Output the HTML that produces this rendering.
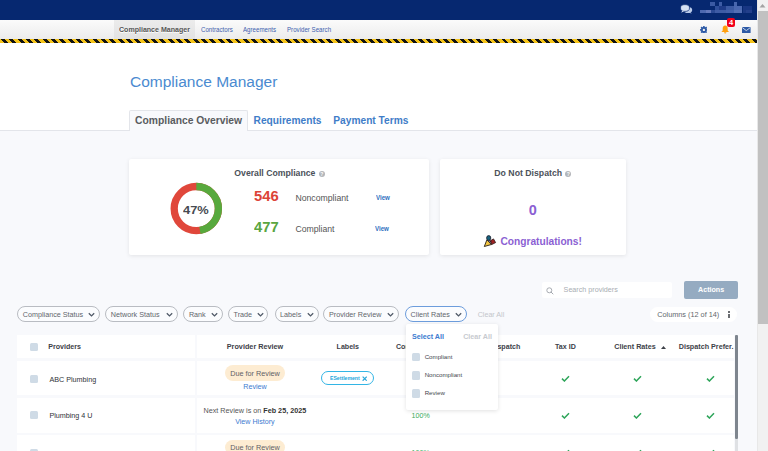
<!DOCTYPE html>
<html><head><meta charset="utf-8"><style>
html,body{margin:0;padding:0;width:768px;height:451px;overflow:hidden;background:#f7f8fc;font-family:"Liberation Sans",sans-serif}
.t{position:absolute;line-height:1;white-space:nowrap}
.r{position:absolute}
</style></head><body>
<div class="r" style="left:0.00px;top:0.00px;width:757.00px;height:451.00px;background:#f8f9fc"></div>
<div class="r" style="left:0.00px;top:0.00px;width:757.00px;height:20.00px;background:#062870"></div>
<div class="r" style="left:0.00px;top:20.00px;width:757.00px;height:18.50px;background:linear-gradient(#fbfbfb,#ececec)"></div>
<div class="r" style="left:114.00px;top:20.00px;width:81.00px;height:18.50px;background:linear-gradient(#ececec,#e2e2e2)"></div>
<div class="t" style="left:119.00px;top:25.78px;font-size:7.7px;font-weight:700;color:#555;transform:scaleX(0.917);transform-origin:0 0;text-shadow:0 1px 0 #fff;">Compliance Manager</div>
<div class="t" style="left:201.00px;top:25.71px;font-size:7.2px;font-weight:400;color:#3d5fae;transform:scaleX(0.855);transform-origin:0 0;">Contractors</div>
<div class="t" style="left:243.00px;top:25.71px;font-size:7.2px;font-weight:400;color:#3d5fae;transform:scaleX(0.855);transform-origin:0 0;">Agreements</div>
<div class="t" style="left:287.00px;top:25.71px;font-size:7.2px;font-weight:400;color:#3d5fae;transform:scaleX(0.855);transform-origin:0 0;">Provider Search</div>
<div class="r" style="left:0.00px;top:38.50px;width:757.00px;height:4.00px;background:repeating-linear-gradient(45deg,#f4c31a 0,#f4c31a 3.1px,#111 3.1px,#111 5.9px)"></div>
<div class="r" style="left:0.00px;top:42.50px;width:757.00px;height:87.00px;background:#fff"></div>
<div class="r" style="left:0.00px;top:129.50px;width:757.00px;height:1.00px;background:#e3e5ea"></div>
<div class="t" style="left:130.00px;top:73.98px;font-size:15.5px;font-weight:400;color:#4a8ad0;">Compliance Manager</div>
<div class="r" style="left:129.00px;top:109.50px;width:118.80px;height:21.00px;background:#f8f9fc;border:1px solid #e3e5ea;border-bottom:none;border-radius:2px 2px 0 0;box-sizing:border-box"></div>
<div class="t" style="left:135.10px;top:115.98px;font-size:10.3px;font-weight:700;color:#595c60;">Compliance Overview</div>
<div class="t" style="left:253.60px;top:115.57px;font-size:10.2px;font-weight:700;color:#3f7dc8;">Requirements</div>
<div class="t" style="left:333.30px;top:115.57px;font-size:10.2px;font-weight:700;color:#3f7dc8;">Payment Terms</div>
<div class="r" style="left:129.00px;top:159.00px;width:300.00px;height:96.00px;background:#fff;border-radius:2px;box-shadow:0 1px 4px rgba(0,0,0,.09)"></div>
<div class="r" style="left:440.00px;top:159.00px;width:186.00px;height:96.00px;background:#fff;border-radius:2px;box-shadow:0 1px 4px rgba(0,0,0,.09)"></div>
<div class="t" style="left:234.30px;top:169.34px;font-size:8.7px;font-weight:700;color:#4b5159;">Overall Compliance</div>
<div class="r" style="left:318.6px;top:170.8px;width:6.2px;height:6.2px;border-radius:50%;background:#b3b6ba;color:#fff;font-size:5px;font-weight:700;line-height:6.2px;text-align:center">?</div>
<svg class="r" style="left:169.7px;top:182.4px" width="53" height="53" viewBox="0 0 53 53"><circle cx="26.3" cy="26.6" r="22.1" fill="none" stroke="#e0473b" stroke-width="7.3"/><circle cx="26.3" cy="26.6" r="22.1" fill="none" stroke="#58a93d" stroke-width="7.3" stroke-dasharray="65.26 200" transform="rotate(-90 26.3 26.6)"/></svg>
<div class="t" style="left:182.80px;top:203.78px;font-size:11.6px;font-weight:700;color:#474b52;transform:scaleX(1.11);transform-origin:0 0;">47%</div>
<div class="t" style="left:254.30px;top:188.12px;font-size:15.1px;font-weight:700;color:#dc4337;transform:scaleX(0.98);transform-origin:0 0;">546</div>
<div class="t" style="left:254.30px;top:219.02px;font-size:15.1px;font-weight:700;color:#5aa540;transform:scaleX(0.98);transform-origin:0 0;">477</div>
<div class="t" style="left:295.40px;top:193.64px;font-size:8.7px;font-weight:400;color:#555;">Noncompliant</div>
<div class="t" style="left:295.40px;top:224.54px;font-size:8.7px;font-weight:400;color:#555;">Compliant</div>
<div class="t" style="left:375.60px;top:195.21px;font-size:6.6px;font-weight:700;color:#2f6fc0;transform:scaleX(0.93);transform-origin:0 0;">View</div>
<div class="t" style="left:374.60px;top:226.11px;font-size:6.6px;font-weight:700;color:#2f6fc0;transform:scaleX(0.93);transform-origin:0 0;">View</div>
<div class="t" style="left:494.30px;top:169.21px;font-size:8.73px;font-weight:700;color:#4b5159;">Do Not Dispatch</div>
<div class="r" style="left:565.2px;top:171px;width:6.2px;height:6.2px;border-radius:50%;background:#b3b6ba;color:#fff;font-size:5px;font-weight:700;line-height:6.2px;text-align:center">?</div>
<div class="t" style="left:532.90px;top:203.13px;font-size:14.5px;font-weight:700;color:#8b5fd3;transform:translateX(-50%);">0</div>
<div class="t" style="left:500.40px;top:236.87px;font-size:10.2px;font-weight:700;color:#8b5fd3;">Congratulations!</div>
<svg class="r" style="left:483px;top:234px" width="14" height="14" viewBox="0 0 14 14"><path d="M1.3 12.5 L3.9 5.8 L8.4 10.5 Z" fill="#f4c540" stroke="#262018" stroke-width=".9" stroke-linejoin="round"/><path d="M4.4 5.4 L8.2 6.8 L8.9 9.9 Z" fill="#3b2a4a"/><ellipse cx="5.7" cy="4" rx="2.1" ry="2.4" fill="#17627e" stroke="#1a1a2a" stroke-width=".8"/><path d="M7.6 6.6 L10.5 4.9 L12.6 8.6 L8.6 10.6 Z" fill="#9e2222" stroke="#2a1414" stroke-width=".8" stroke-linejoin="round"/></svg>
<div class="r" style="left:541.70px;top:281.50px;width:130.80px;height:16.70px;background:#fff;border-radius:2px"></div>
<svg class="r" style="left:546.3px;top:286.6px" width="8" height="8" viewBox="0 0 8 8"><circle cx="3.3" cy="3.3" r="2.5" fill="none" stroke="#a3a8ae" stroke-width=".95"/><path d="M5.1 5.1 L7 7" stroke="#a3a8ae" stroke-width="1" stroke-linecap="round"/></svg>
<div class="t" style="left:563.60px;top:287.12px;font-size:7.18px;font-weight:400;color:#a9adb3;">Search providers</div>
<div class="r" style="left:683.80px;top:281.20px;width:54.00px;height:17.50px;background:#95abc1;border-radius:2px"></div>
<div class="t" style="left:698.00px;top:286.55px;font-size:7.15px;font-weight:700;color:#fff;">Actions</div>
<div class="r" style="left:17.2px;top:306.4px;width:82.89999999999999px;height:15.9px;box-sizing:border-box;border:1px solid #b9bcc2;border-radius:8px;background:#fbfcfe"></div>
<div class="t" style="left:22.80px;top:310.81px;font-size:7.2px;font-weight:400;color:#62666c;">Compliance Status</div>
<svg class="r" style="left:88.25px;top:311.5px" width="7" height="6" viewBox="0 0 7 6"><path d="M0.8 1.2 L3.5 3.9 L6.2 1.2" fill="none" stroke="#505a68" stroke-width="1.3"/></svg>
<div class="r" style="left:105.2px;top:306.4px;width:72.7px;height:15.9px;box-sizing:border-box;border:1px solid #b9bcc2;border-radius:8px;background:#fbfcfe"></div>
<div class="t" style="left:110.80px;top:310.81px;font-size:7.2px;font-weight:400;color:#62666c;">Network Status</div>
<svg class="r" style="left:166.05px;top:311.5px" width="7" height="6" viewBox="0 0 7 6"><path d="M0.8 1.2 L3.5 3.9 L6.2 1.2" fill="none" stroke="#505a68" stroke-width="1.3"/></svg>
<div class="r" style="left:183.3px;top:306.4px;width:39.5px;height:15.9px;box-sizing:border-box;border:1px solid #b9bcc2;border-radius:8px;background:#fbfcfe"></div>
<div class="t" style="left:188.90px;top:310.81px;font-size:7.2px;font-weight:400;color:#62666c;">Rank</div>
<svg class="r" style="left:210.95px;top:311.5px" width="7" height="6" viewBox="0 0 7 6"><path d="M0.8 1.2 L3.5 3.9 L6.2 1.2" fill="none" stroke="#505a68" stroke-width="1.3"/></svg>
<div class="r" style="left:228px;top:306.4px;width:40.39999999999998px;height:15.9px;box-sizing:border-box;border:1px solid #b9bcc2;border-radius:8px;background:#fbfcfe"></div>
<div class="t" style="left:233.60px;top:310.81px;font-size:7.2px;font-weight:400;color:#62666c;">Trade</div>
<svg class="r" style="left:256.55px;top:311.5px" width="7" height="6" viewBox="0 0 7 6"><path d="M0.8 1.2 L3.5 3.9 L6.2 1.2" fill="none" stroke="#505a68" stroke-width="1.3"/></svg>
<div class="r" style="left:274.5px;top:306.4px;width:44.10000000000002px;height:15.9px;box-sizing:border-box;border:1px solid #b9bcc2;border-radius:8px;background:#fbfcfe"></div>
<div class="t" style="left:280.10px;top:310.81px;font-size:7.2px;font-weight:400;color:#62666c;">Labels</div>
<svg class="r" style="left:306.75px;top:311.5px" width="7" height="6" viewBox="0 0 7 6"><path d="M0.8 1.2 L3.5 3.9 L6.2 1.2" fill="none" stroke="#505a68" stroke-width="1.3"/></svg>
<div class="r" style="left:323.4px;top:306.4px;width:75.60000000000002px;height:15.9px;box-sizing:border-box;border:1px solid #b9bcc2;border-radius:8px;background:#fbfcfe"></div>
<div class="t" style="left:329.00px;top:310.81px;font-size:7.2px;font-weight:400;color:#62666c;">Provider Review</div>
<svg class="r" style="left:387.15px;top:311.5px" width="7" height="6" viewBox="0 0 7 6"><path d="M0.8 1.2 L3.5 3.9 L6.2 1.2" fill="none" stroke="#505a68" stroke-width="1.3"/></svg>
<div class="r" style="left:405px;top:306.4px;width:61.89999999999998px;height:15.9px;box-sizing:border-box;border:1px solid #6d9ddc;border-radius:8px;background:#fbfcfe"></div>
<div class="t" style="left:410.60px;top:310.81px;font-size:7.2px;font-weight:400;color:#62666c;">Client Rates</div>
<svg class="r" style="left:455.05px;top:311.5px" width="7" height="6" viewBox="0 0 7 6"><path d="M0.8 1.2 L3.5 3.9 L6.2 1.2" fill="none" stroke="#505a68" stroke-width="1.3"/></svg>
<div class="t" style="left:477.70px;top:311.75px;font-size:7.15px;font-weight:400;color:#c3c6cb;">Clear All</div>
<div class="r" style="left:649.70px;top:307.00px;width:87.80px;height:15.00px;background:#fff;border-radius:8px"></div>
<div class="t" style="left:657.20px;top:311.32px;font-size:7.3px;font-weight:400;color:#63676d;">Columns (12 of 14)</div>
<div class="r" style="left:727.70px;top:311.20px;width:2.10px;height:2.10px;background:#3a3d42;border-radius:50%"></div>
<div class="r" style="left:727.70px;top:313.50px;width:2.10px;height:2.10px;background:#3a3d42;border-radius:50%"></div>
<div class="r" style="left:727.70px;top:315.80px;width:2.10px;height:2.10px;background:#3a3d42;border-radius:50%"></div>
<div class="r" style="left:17.00px;top:335.20px;width:178.40px;height:23.20px;background:#fff"></div>
<div class="r" style="left:197.40px;top:335.20px;width:537.10px;height:23.20px;background:#fff"></div>
<div class="r" style="left:17.00px;top:360.80px;width:178.40px;height:34.50px;background:#fff"></div>
<div class="r" style="left:197.40px;top:360.80px;width:537.10px;height:34.50px;background:#fff"></div>
<div class="r" style="left:17.00px;top:398.00px;width:178.40px;height:34.70px;background:#fff"></div>
<div class="r" style="left:197.40px;top:398.00px;width:537.10px;height:34.70px;background:#fff"></div>
<div class="r" style="left:17.00px;top:435.40px;width:178.40px;height:34.60px;background:#fff"></div>
<div class="r" style="left:197.40px;top:435.40px;width:537.10px;height:34.60px;background:#fff"></div>
<div class="r" style="left:29.90px;top:342.80px;width:8.20px;height:8.20px;background:#cfdbe6;border-radius:1.5px"></div>
<div class="t" style="left:48.20px;top:343.79px;font-size:7.1px;font-weight:700;color:#3d4148;">Providers</div>
<div class="t" style="left:255.00px;top:342.86px;font-size:7.25px;font-weight:700;color:#3d4148;transform:translateX(-50%);">Provider Review</div>
<div class="t" style="left:347.80px;top:344.19px;font-size:7.1px;font-weight:700;color:#3d4148;transform:translateX(-50%);">Labels</div>
<div class="t" style="left:396.00px;top:343.79px;font-size:7.1px;font-weight:700;color:#3d4148;">Compliance</div>
<div class="t" style="left:465.10px;top:343.79px;font-size:7.1px;font-weight:700;color:#3d4148;">Do Not Dispatch</div>
<div class="t" style="left:565.40px;top:343.79px;font-size:7.1px;font-weight:700;color:#3d4148;transform:translateX(-50%);">Tax ID</div>
<div class="t" style="left:614.20px;top:343.21px;font-size:7.2px;font-weight:700;color:#3d4148;">Client Rates</div>
<svg class="r" style="left:661px;top:345.5px" width="5" height="3" viewBox="0 0 5 3"><path d="M0 3 L2.5 0 L5 3 Z" fill="#3d4148"/></svg>
<div class="t" style="left:678.70px;top:343.21px;font-size:7.2px;font-weight:700;color:#3d4148;">Dispatch Prefer.</div>
<div class="r" style="left:30.20px;top:374.60px;width:8.20px;height:8.20px;background:#cfdbe6;border-radius:1.5px"></div>
<div class="t" style="left:49.40px;top:375.91px;font-size:7.2px;font-weight:400;color:#2f3237;">ABC Plumbing</div>
<div class="r" style="left:225.00px;top:365.20px;width:60.10px;height:15.90px;background:#fdecd2;border-radius:8px"></div>
<div class="t" style="left:255.00px;top:370.15px;font-size:7.27px;font-weight:400;color:#5f6166;transform:translateX(-50%);">Due for Review</div>
<div class="t" style="left:255.00px;top:382.81px;font-size:7.2px;font-weight:400;color:#3c7bd0;transform:translateX(-50%);">Review</div>
<div class="r" style="left:321.1px;top:371.1px;width:53.4px;height:14.4px;box-sizing:border-box;border:1px solid #33b5e5;border-radius:7.2px;background:#fff"></div>
<div class="t" style="left:329.50px;top:375.91px;font-size:5.3px;font-weight:700;color:#23a6dc;transform:scaleX(0.97);transform-origin:0 0;">ESettlement</div>
<svg class="r" style="left:361.8px;top:375.6px" width="5.4" height="5.4" viewBox="0 0 5 5"><path d="M0.6 0.6 L4.4 4.4 M4.4 0.6 L0.6 4.4" stroke="#2aa8da" stroke-width="1.1"/></svg>
<div class="r" style="left:30.20px;top:410.50px;width:8.20px;height:8.20px;background:#cfdbe6;border-radius:1.5px"></div>
<div class="t" style="left:49.40px;top:412.01px;font-size:7.2px;font-weight:400;color:#2f3237;">Plumbing 4 U</div>
<div class="t" style="left:203.50px;top:406.59px;font-size:7.22px;font-weight:400;color:#555;">Next Review is on <b style="color:#333">Feb 25, 2025</b></div>
<div class="t" style="left:254.90px;top:419.06px;font-size:7.13px;font-weight:400;color:#3c7bd0;transform:translateX(-50%);">View History</div>
<div class="t" style="left:411.60px;top:412.59px;font-size:7.1px;font-weight:400;color:#3aaa5c;">100%</div>
<div class="r" style="left:30.20px;top:448.60px;width:8.20px;height:8.20px;background:#cfdbe6;border-radius:1.5px"></div>
<div class="r" style="left:225.10px;top:439.50px;width:59.60px;height:15.90px;background:#fdecd2;border-radius:8px"></div>
<div class="t" style="left:255.00px;top:444.45px;font-size:7.27px;font-weight:400;color:#5f6166;transform:translateX(-50%);">Due for Review</div>
<div class="t" style="left:411.60px;top:449.79px;font-size:7.1px;font-weight:400;color:#3aaa5c;">100%</div>
<svg class="r" style="left:560.80px;top:374.50px" width="9" height="7" viewBox="0 0 9 7"><path d="M1 3.6 L3.4 6 L8 1.2" fill="none" stroke="#2ea55a" stroke-width="1.5"/></svg>
<svg class="r" style="left:633.10px;top:374.50px" width="9" height="7" viewBox="0 0 9 7"><path d="M1 3.6 L3.4 6 L8 1.2" fill="none" stroke="#2ea55a" stroke-width="1.5"/></svg>
<svg class="r" style="left:705.50px;top:374.50px" width="9" height="7" viewBox="0 0 9 7"><path d="M1 3.6 L3.4 6 L8 1.2" fill="none" stroke="#2ea55a" stroke-width="1.5"/></svg>
<svg class="r" style="left:560.80px;top:411.80px" width="9" height="7" viewBox="0 0 9 7"><path d="M1 3.6 L3.4 6 L8 1.2" fill="none" stroke="#2ea55a" stroke-width="1.5"/></svg>
<svg class="r" style="left:633.10px;top:411.80px" width="9" height="7" viewBox="0 0 9 7"><path d="M1 3.6 L3.4 6 L8 1.2" fill="none" stroke="#2ea55a" stroke-width="1.5"/></svg>
<svg class="r" style="left:705.50px;top:411.80px" width="9" height="7" viewBox="0 0 9 7"><path d="M1 3.6 L3.4 6 L8 1.2" fill="none" stroke="#2ea55a" stroke-width="1.5"/></svg>
<svg class="r" style="left:560.80px;top:449.10px" width="9" height="7" viewBox="0 0 9 7"><path d="M1 3.6 L3.4 6 L8 1.2" fill="none" stroke="#2ea55a" stroke-width="1.5"/></svg>
<svg class="r" style="left:633.10px;top:449.10px" width="9" height="7" viewBox="0 0 9 7"><path d="M1 3.6 L3.4 6 L8 1.2" fill="none" stroke="#2ea55a" stroke-width="1.5"/></svg>
<svg class="r" style="left:705.50px;top:449.10px" width="9" height="7" viewBox="0 0 9 7"><path d="M1 3.6 L3.4 6 L8 1.2" fill="none" stroke="#2ea55a" stroke-width="1.5"/></svg>
<div class="r" style="left:735.00px;top:334.80px;width:2.80px;height:103.90px;background:#7e858e;border-radius:1px"></div>
<div class="r" style="left:735.00px;top:438.70px;width:2.80px;height:12.30px;background:#dfe1e4"></div>
<div class="r" style="left:405.70px;top:323.80px;width:92.70px;height:85.80px;background:#fff;border-radius:2px;box-shadow:0 1px 4px rgba(0,0,0,.12)"></div>
<div class="t" style="left:412.00px;top:334.05px;font-size:7.15px;font-weight:700;color:#3c7bd0;">Select All</div>
<div class="t" style="left:463.20px;top:334.05px;font-size:7.15px;font-weight:700;color:#c7cacf;">Clear All</div>
<div class="r" style="left:412.00px;top:353.10px;width:8.40px;height:8.40px;background:#cfdbe6;border-radius:1.5px"></div>
<div class="t" style="left:424.70px;top:353.99px;font-size:6.15px;font-weight:400;color:#45484d;">Compliant</div>
<div class="r" style="left:412.00px;top:371.20px;width:8.40px;height:8.40px;background:#cfdbe6;border-radius:1.5px"></div>
<div class="t" style="left:424.70px;top:372.09px;font-size:6.15px;font-weight:400;color:#45484d;">Noncompliant</div>
<div class="r" style="left:412.00px;top:389.30px;width:8.40px;height:8.40px;background:#cfdbe6;border-radius:1.5px"></div>
<div class="t" style="left:424.70px;top:390.19px;font-size:6.15px;font-weight:400;color:#45484d;">Review</div>
<div class="r" style="left:757.00px;top:0.00px;width:11.00px;height:451.00px;background:#f1f1f1;border-left:1px solid #e8e8e8;box-sizing:border-box"></div>
<div class="r" style="left:758.00px;top:10.50px;width:9.50px;height:313.50px;background:#c1c1c1"></div>
<svg class="r" style="left:759px;top:3px" width="7" height="5" viewBox="0 0 7 5"><path d="M0.5 4.5 L3.5 1 L6.5 4.5 Z" fill="#a3a3a3"/></svg>
<svg class="r" style="left:679.5px;top:4px" width="13" height="10" viewBox="0 0 13 10"><ellipse cx="8" cy="6" rx="4.2" ry="3.1" fill="#b9cbe9"/><path d="M10 8 L11.8 9.8 L9 8.6 Z" fill="#b9cbe9"/><ellipse cx="5" cy="4" rx="4.5" ry="3.4" fill="#d6e2f4" stroke="#062870" stroke-width=".7"/><path d="M2.5 6.3 L1.2 8.8 L4.3 7 Z" fill="#d6e2f4"/></svg>
<div class="r" style="left:710.00px;top:2.00px;width:4.80px;height:3.70px;background:#3b5aa3"></div>
<div class="r" style="left:718.80px;top:2.00px;width:3.60px;height:3.70px;background:#3d5ca5"></div>
<div class="r" style="left:733.70px;top:2.00px;width:3.60px;height:3.90px;background:#4766ad"></div>
<div class="r" style="left:714.80px;top:5.70px;width:4.00px;height:4.00px;background:#2f4f9a"></div>
<div class="r" style="left:718.80px;top:5.70px;width:7.20px;height:4.00px;background:#1f3c89"></div>
<div class="r" style="left:726.00px;top:5.70px;width:7.70px;height:4.00px;background:#3b5aa3"></div>
<div class="r" style="left:733.70px;top:5.70px;width:8.80px;height:4.00px;background:#4a68b0"></div>
<div class="r" style="left:742.50px;top:5.70px;width:9.50px;height:4.00px;background:#183683"></div>
<div class="r" style="left:700.00px;top:9.70px;width:6.00px;height:3.60px;background:#4d69b0"></div>
<div class="r" style="left:706.00px;top:9.70px;width:5.00px;height:3.60px;background:#6378bb"></div>
<div class="r" style="left:711.00px;top:9.70px;width:3.80px;height:3.60px;background:#2b4a95"></div>
<div class="r" style="left:714.80px;top:9.70px;width:11.20px;height:3.60px;background:#3e5ca5"></div>
<div class="r" style="left:726.00px;top:9.70px;width:7.70px;height:3.60px;background:#4361aa"></div>
<div class="r" style="left:733.70px;top:9.70px;width:8.80px;height:3.60px;background:#5470b5"></div>
<div class="r" style="left:742.50px;top:9.70px;width:3.50px;height:3.60px;background:#1a3884"></div>
<div class="r" style="left:746.00px;top:9.70px;width:6.00px;height:3.60px;background:#223f8b"></div>
<svg class="r" style="left:699.6px;top:25.6px" width="7.8" height="7.8" viewBox="0 0 8 8"><g fill="#2d5aa6"><circle cx="4" cy="4" r="2.9"/><rect x="3.2" y="0" width="1.6" height="8"/><rect x="0" y="3.2" width="8" height="1.6"/><rect x="3.2" y="0" width="1.6" height="8" transform="rotate(45 4 4)"/><rect x="3.2" y="0" width="1.6" height="8" transform="rotate(-45 4 4)"/></g><circle cx="4" cy="4" r="1.2" fill="#f0f0f0"/></svg>
<svg class="r" style="left:720.5px;top:25.2px" width="8.4" height="8.6" viewBox="0 0 8.4 8.6"><path d="M4.2 0.6 C2.4 0.6 1.7 2 1.7 3.6 L1.7 5.4 L0.4 6.9 L8 6.9 L6.7 5.4 L6.7 3.6 C6.7 2 6 0.6 4.2 0.6 Z" fill="#ff9e0c"/><path d="M3 7.3 A1.2 1.2 0 0 0 5.4 7.3 Z" fill="#ff9e0c"/></svg>
<div class="r" style="left:727.10px;top:18.20px;width:8.20px;height:9.00px;background:#f2001b;border-radius:2px"></div>
<div class="t" style="left:731.20px;top:19.25px;font-size:7.5px;font-weight:700;color:#fff;transform:translateX(-50%);">4</div>
<svg class="r" style="left:742px;top:26.8px" width="8.6" height="6.4" viewBox="0 0 8.6 6.4"><rect x="0" y="0" width="8.6" height="6.4" rx=".6" fill="#2d5aa6"/><path d="M0.3 0.6 L4.3 3.6 L8.3 0.6" fill="none" stroke="#eef0f4" stroke-width=".8"/></svg>
</body></html>
